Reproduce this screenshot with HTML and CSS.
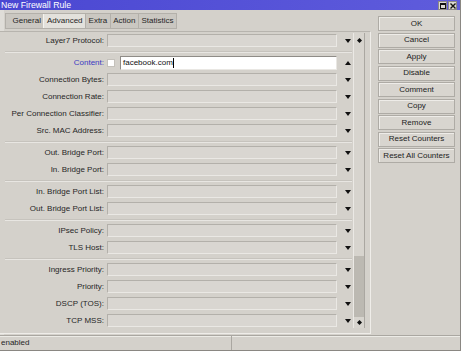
FILE: index.html
```html
<!DOCTYPE html>
<html>
<head>
<meta charset="utf-8">
<link rel="stylesheet" href="styles.css">
</head>
<body>
<div class="window">
  <div class="titlebar">
    <span class="title">New Firewall Rule</span>
    <div class="tbtns">
      <span class="tbtn"><svg width="6" height="6" viewBox="0 0 6 6"><rect x="0.5" y="0.5" width="5" height="5" fill="none" stroke="#111"/><rect x="0" y="0" width="6" height="2" fill="#111"/></svg></span>
      <span class="tbtn"><svg width="6" height="6" viewBox="0 0 6 6"><path d="M0.5 0.5L5.5 5.5M5.5 0.5L0.5 5.5" stroke="#111" stroke-width="1.4"/></svg></span>
    </div>
  </div>
  <div class="main">
    <div class="left">
      <div class="tabs">
        <span class="tab">General</span>
        <span class="tab active">Advanced</span>
        <span class="tab">Extra</span>
        <span class="tab">Action</span>
        <span class="tab">Statistics</span>
      </div>
      <div class="panel">
        <div class="form">
          <div class="row"><span class="lbl">Layer7 Protocol:</span><span class="field"></span><span class="arr"></span></div>
          <div class="sep"></div>
          <div class="row"><span class="lbl blue">Content:</span><span class="cfield"><span class="chk"></span><span class="tinput">facebook.com<span class="caret"></span></span></span><span class="arr up"></span></div>
          <div class="row"><span class="lbl">Connection Bytes:</span><span class="field"></span><span class="arr"></span></div>
          <div class="row"><span class="lbl">Connection Rate:</span><span class="field"></span><span class="arr"></span></div>
          <div class="row"><span class="lbl">Per Connection Classifier:</span><span class="field"></span><span class="arr"></span></div>
          <div class="row"><span class="lbl">Src. MAC Address:</span><span class="field"></span><span class="arr"></span></div>
          <div class="sep"></div>
          <div class="row"><span class="lbl">Out. Bridge Port:</span><span class="field"></span><span class="arr"></span></div>
          <div class="row"><span class="lbl">In. Bridge Port:</span><span class="field"></span><span class="arr"></span></div>
          <div class="sep"></div>
          <div class="row"><span class="lbl">In. Bridge Port List:</span><span class="field"></span><span class="arr"></span></div>
          <div class="row"><span class="lbl">Out. Bridge Port List:</span><span class="field"></span><span class="arr"></span></div>
          <div class="sep"></div>
          <div class="row"><span class="lbl">IPsec Policy:</span><span class="field"></span><span class="arr"></span></div>
          <div class="row"><span class="lbl">TLS Host:</span><span class="field"></span><span class="arr"></span></div>
          <div class="sep"></div>
          <div class="row"><span class="lbl">Ingress Priority:</span><span class="field"></span><span class="arr"></span></div>
          <div class="row"><span class="lbl">Priority:</span><span class="field"></span><span class="arr"></span></div>
          <div class="row"><span class="lbl">DSCP (TOS):</span><span class="field"></span><span class="arr"></span></div>
          <div class="row"><span class="lbl">TCP MSS:</span><span class="field"></span><span class="arr"></span></div>
        </div>
        <div class="scroll">
          <span class="sbtn"><svg width="5" height="5" viewBox="0 0 5 5"><path d="M2.5 0L5 2.5L2.5 5L0 2.5Z" fill="#111"/></svg></span>
          <span class="track"></span>
          <span class="thumb"></span>
          <span class="sbtn bottom"><svg width="5" height="5" viewBox="0 0 5 5"><path d="M2.5 0L5 2.5L2.5 5L0 2.5Z" fill="#111"/></svg></span>
        </div>
      </div>
    </div>
    <div class="buttons">
      <span class="btn">OK</span>
      <span class="btn">Cancel</span>
      <span class="btn">Apply</span>
      <span class="btn">Disable</span>
      <span class="btn">Comment</span>
      <span class="btn">Copy</span>
      <span class="btn">Remove</span>
      <span class="btn">Reset Counters</span>
      <span class="btn">Reset All Counters</span>
    </div>
  </div>
  <div class="status">
    <span class="st1">enabled</span>
    <span class="st2"></span>
  </div>
</div>
</body>
</html>
```
FILE: styles.css
```css
* { box-sizing: border-box; }
html, body { margin: 0; background: #fff; }
body {
  font-family: "Liberation Sans", Arial, sans-serif;
  font-size: 8px;
  line-height: 1;
  color: #262626;
}
.window {
  width: 461px;
  height: 351px;
  border-right: 1px solid #8a8782;
  border-bottom: 1px solid #8a8782;
  background: #d4d1cb;
  display: flex;
  flex-direction: column;
}
.titlebar {
  height: 10px;
  background: linear-gradient(to right, #4a47d2, #5f5cdc);
  display: flex;
  justify-content: space-between;
  align-items: center;
  padding-left: 1px;
  color: #fff;
}
.title { font-size: 8.7px; }
.tbtns {
  display: flex;
  gap: 1px;
  margin-right: 3px;
  align-self: flex-start;
  margin-top: 1px;
}
.tbtn {
  width: 9px;
  height: 9px;
  background: #dddad4;
  border: 1px solid #8d8a85;
  display: flex;
  align-items: center;
  justify-content: center;
}
.main {
  height: 325px;
  display: flex;
  background: linear-gradient(to right, #dfddd8 0 4px, #d4d1cb 4px);
}
.left {
  width: 371px;
  display: flex;
  flex-direction: column;
}
.tabs {
  margin: 3px 0 2px 5px;
  height: 16px;
  align-self: flex-start;
  display: flex;
  padding-left: 4px;
  background: #cac7c1;
  border: 1px solid #b3b0aa;
}
.tab {
  padding: 0 2.5px;
  display: flex;
  align-items: center;
  border-right: 1px solid #b3b0aa;
}
.tab:last-child { border-right: 0; }
.tab.active {
  background: #e3e1dc;
  border-left: 1px solid #f4f3ef;
  margin-left: -1px;
}
.panel {
  flex: 1;
  display: flex;
  align-items: flex-start;
  margin-bottom: 1px;
  border-top: 1px solid #b7b4ae;
  border-right: 1px solid #efede9;
  border-bottom: 1px solid #efede9;
  background: #d4d1cb;
}
.form {
  width: 353px;
  display: flex;
  flex-direction: column;
}
.row {
  height: 17px;
  display: grid;
  grid-template-columns: 104px 230px 16px;
  column-gap: 3px;
  align-items: center;
}
.lbl {
  text-align: right;
  white-space: nowrap;
}
.lbl.blue { color: #3b3bc2; }
.field {
  height: 13px;
  background: #d9d6d1;
  border: 1px solid;
  border-color: #b3b0aa #eae8e4 #eae8e4 #b3b0aa;
}
.cfield {
  display: flex;
  align-items: center;
  gap: 5px;
}
.chk {
  width: 8px;
  height: 8px;
  background: #fff;
  border: 1px solid #c4c1bb;
}
.tinput {
  flex: 1;
  height: 14px;
  background: #fff;
  border: 1px solid;
  border-color: #8f8c87 #e9e7e3 #e9e7e3 #8f8c87;
  padding-left: 2px;
  display: flex;
  align-items: center;
  color: #111;
}
.caret {
  width: 1px;
  height: 10px;
  background: #000;
}
.arr {
  display: flex;
  justify-content: center;
  align-items: center;
}
.arr::before {
  content: "";
  width: 0;
  height: 0;
  border-left: 3.5px solid transparent;
  border-right: 3.5px solid transparent;
  border-top: 4px solid #111;
}
.arr.up::before {
  border-top: 0;
  border-bottom: 4px solid #111;
}
.sep {
  height: 5px;
  display: flex;
  align-items: center;
  padding: 0 1px 0 5px;
}
.sep::after {
  content: "";
  flex: 1;
  border-top: 1px solid #c6c3bd;
  border-bottom: 1px solid #e8e6e2;
}
.scroll {
  width: 12px;
  height: 295px;
  margin-top: 1px;
  display: flex;
  flex-direction: column;
  background: #d7d4ce;
  border-left: 1px solid #ebe9e5;
  border-right: 1px solid #aaa7a1;
}
.sbtn {
  height: 14px;
  display: flex;
  align-items: center;
  justify-content: center;
}
.sbtn.bottom { height: 11px; }
.track { flex: 1; }
.thumb {
  height: 61px;
  background: #bcb9b2;
}
.buttons {
  padding: 6px 0 0 7px;
  display: flex;
  flex-direction: column;
  gap: 1.5px;
}
.btn {
  width: 77px;
  height: 15px;
  display: flex;
  align-items: center;
  justify-content: center;
  background: #d8d5cf;
  border: 1px solid #aeaba5;
  box-shadow: inset 1px 1px #eeece8;
  color: #222;
}
.status {
  height: 15px;
  display: flex;
  border-top: 1px solid #aaa7a1;
  box-shadow: inset 0 1px #ecebe6;
}
.st1 {
  width: 232px;
  padding-left: 1px;
  display: flex;
  align-items: center;
  border-right: 1px solid #aaa7a1;
}
.st2 { flex: 1; }
```
